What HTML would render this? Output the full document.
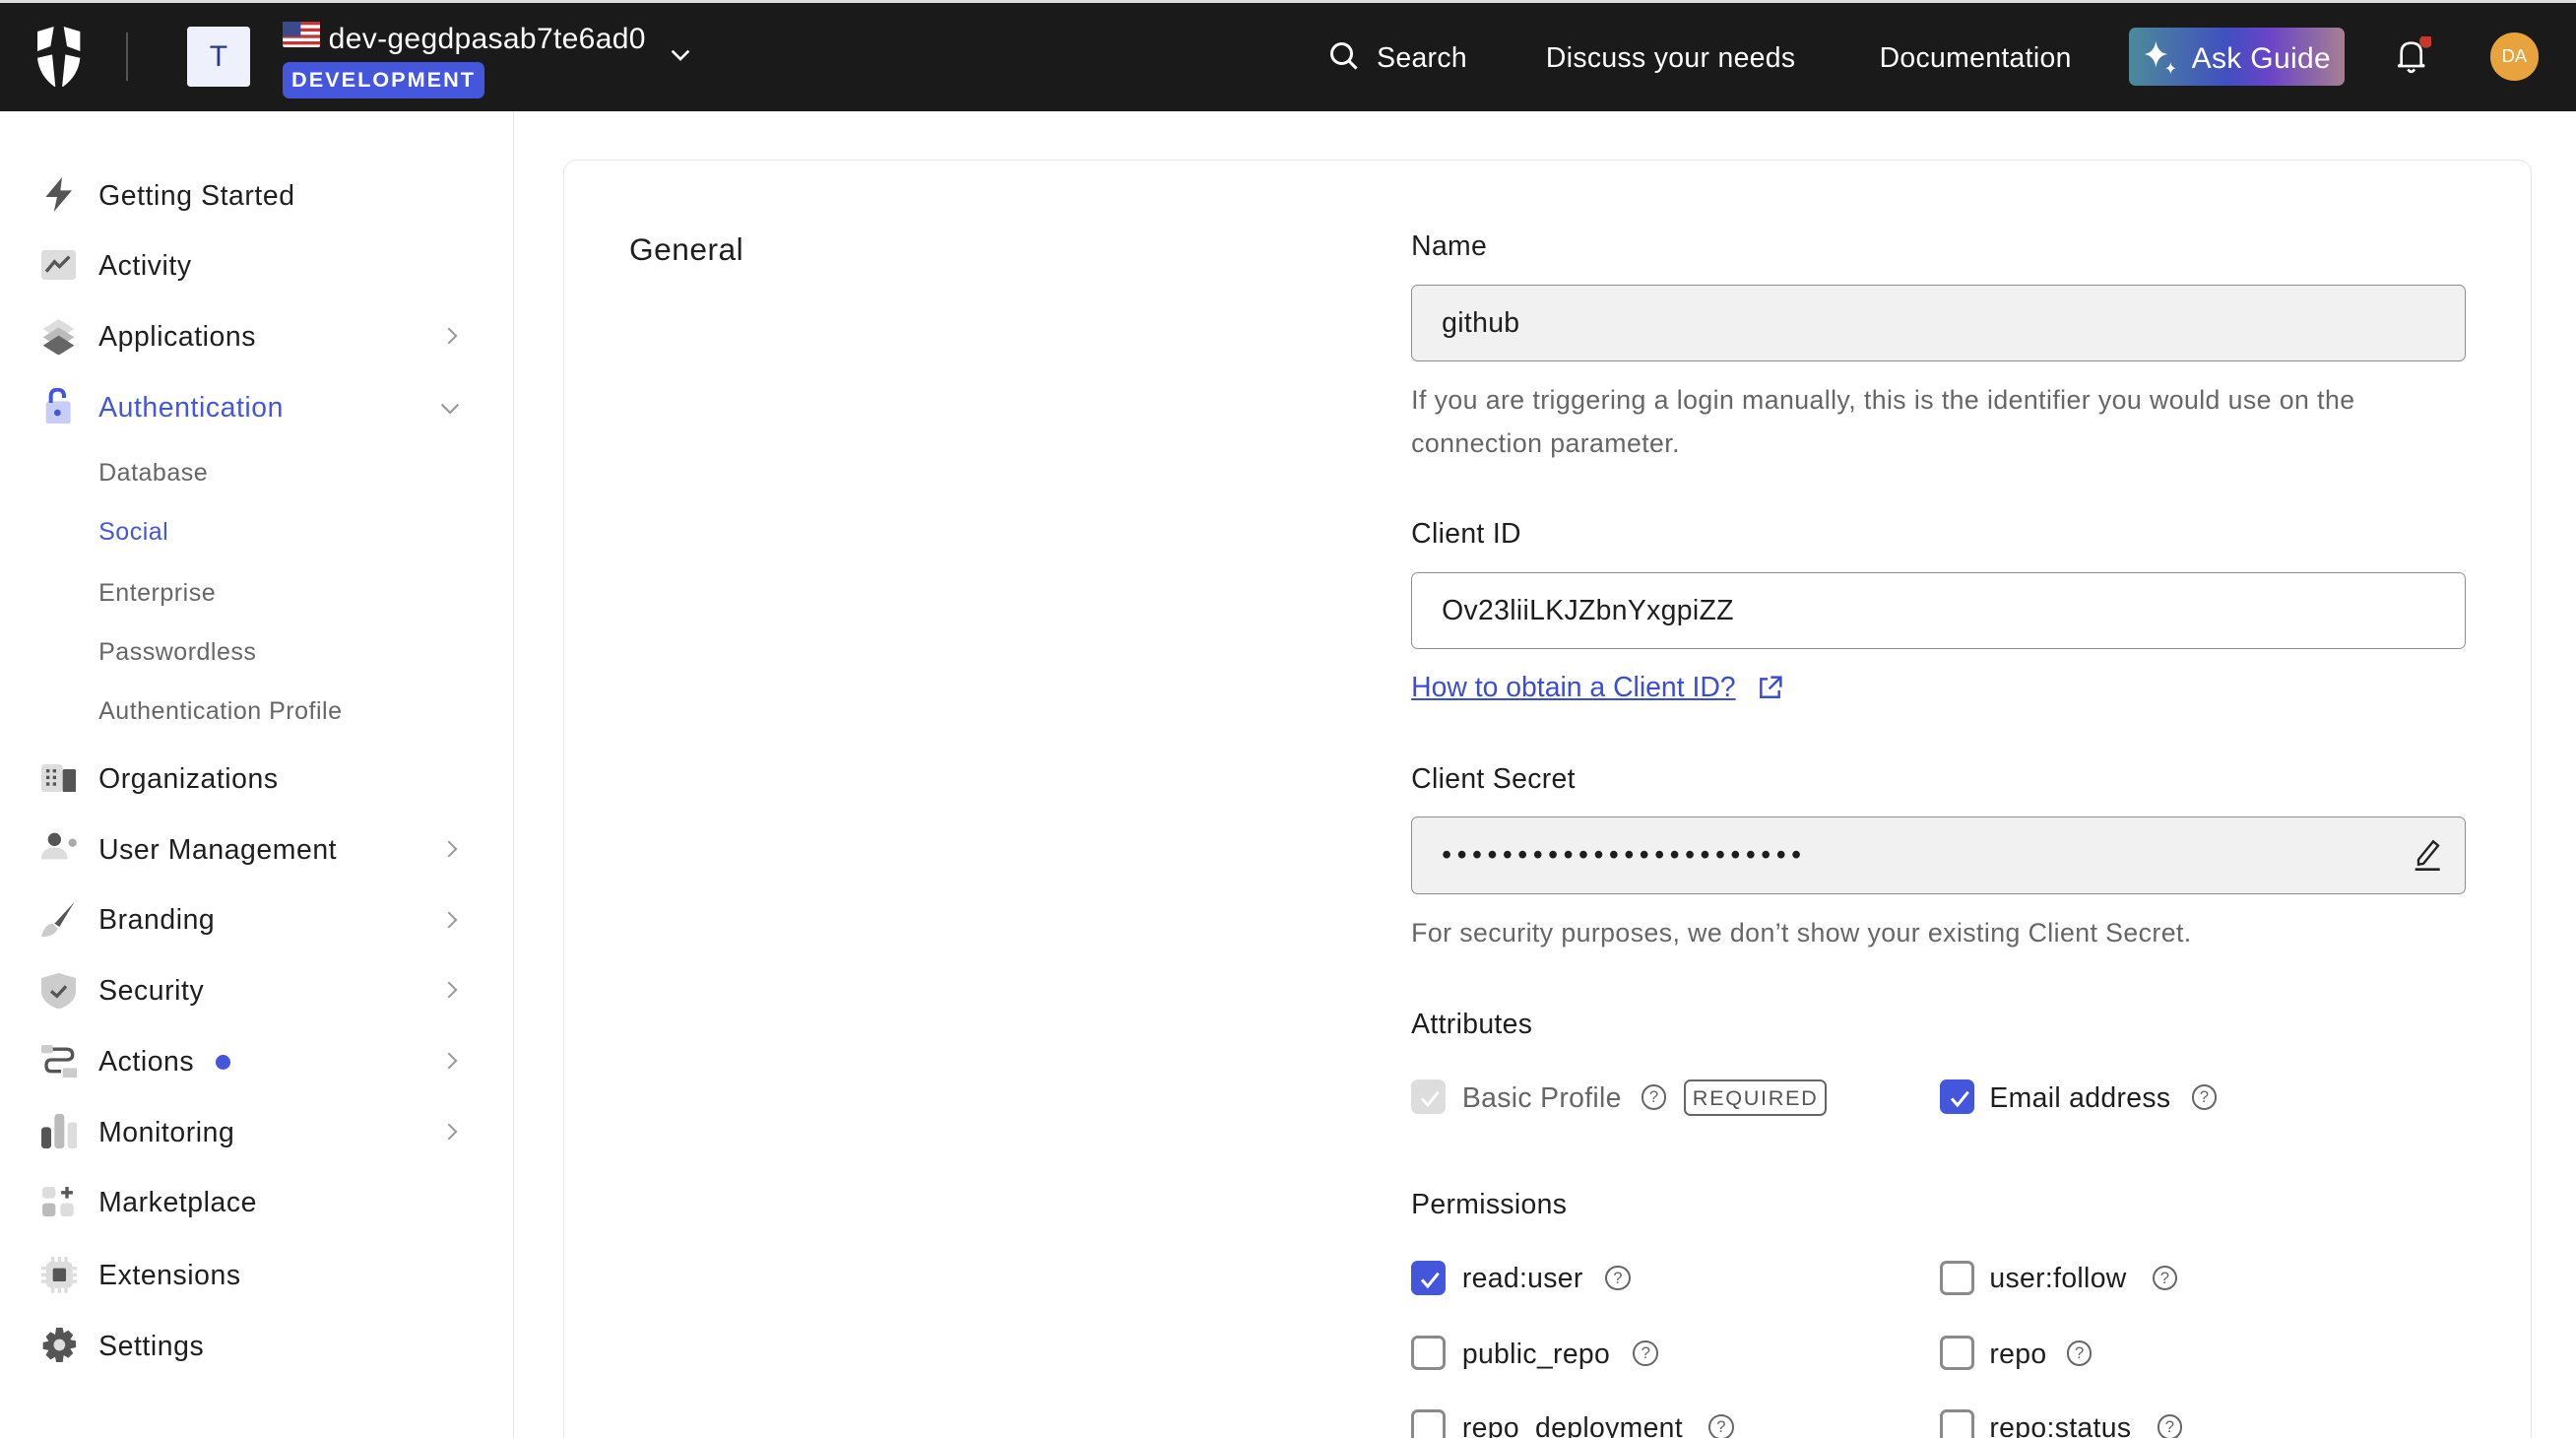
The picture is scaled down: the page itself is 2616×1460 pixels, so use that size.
<!DOCTYPE html>
<html><head><meta charset="utf-8"><style>
html,body{margin:0;padding:0;background:#fff;overflow:hidden}
#r{position:relative;width:1568px;height:875px;zoom:1.66837;font-family:"Liberation Sans",sans-serif;color:#1e1e1e;overflow:hidden}
.a{position:absolute;white-space:nowrap}
.top{position:absolute;left:0;top:0;width:1568px;height:68px;background:#1a1a1a;border-top:2px solid #ddd;box-sizing:border-box}
.w{color:#fff;font-size:17px;padding-top:1.5px;letter-spacing:0.2px}
.nav{font-size:17px;line-height:20px;color:#1e1e1e;padding-top:1.5px;letter-spacing:0.35px}
.sub{font-size:15px;color:#666;padding-top:1.5px;letter-spacing:0.3px}
.chev{position:absolute;left:270px;width:6px;height:6px;border-right:1.3px solid #999;border-top:1.3px solid #999;transform:rotate(45deg)}
.lbl{font-size:17px;color:#1e1e1e;padding-top:1.5px;letter-spacing:0.2px}
.inp{position:absolute;left:859px;width:642px;height:47px;border:1px solid #8d8d8d;border-radius:4px;box-sizing:border-box;font-size:17px;line-height:46px;padding-left:18px;letter-spacing:0.2px}
.help{font-size:16px;color:#666;padding-top:1.5px;letter-spacing:0.25px}
.cb{position:absolute;width:21px;height:21px;border:2px solid #8a8a8a;border-radius:4px;box-sizing:border-box}
.cb.on{background:#4356dc;border-color:#4356dc}
.cb.dis{background:#ddd;border-color:#ddd}
.cb svg{position:absolute;left:2px;top:2px}
.q{position:absolute;width:13px;height:13px;border:1.3px solid #666;border-radius:50%;font-size:10px;line-height:13px;text-align:center;color:#666}
</style></head><body><div id="r">
<div class="top"></div>
<svg class="a" style="left:20px;top:16px" width="32" height="37" viewBox="0 0 32 37"><path d="M3 3 L13 0 L11 12 L3 15 Z M29 3 L19 0 L21 12 L29 15 Z M3 19 L12 17 L14 37 Q4 30 3 19 Z M29 19 L20 17 L18 37 Q28 30 29 19 Z" fill="#fff"/></svg>
<div class="a" style="left:77px;top:20px;width:1px;height:29px;background:#555"></div>
<div class="a" style="left:114px;top:16px;width:38px;height:37px;background:#eef0fb;border-radius:2px;color:#2a3a8a;font-size:18px;text-align:center;line-height:37px">T</div>
<svg class="a" style="left:172px;top:13px" width="23" height="16"><rect width="23" height="16" rx="2" fill="#fff"/><g fill="#c53535"><rect y="0" width="23" height="2"/><rect y="4" width="23" height="2"/><rect y="8" width="23" height="2"/><rect y="12" width="23" height="2"/></g><rect width="11" height="9" fill="#3b4a8c"/></svg>
<div class="a w" style="left:200px;top:12px;font-size:18px">dev-gegdpasab7te6ad0</div>
<div class="a" style="left:172px;top:38px;width:123px;height:22px;background:#4356dc;border-radius:4px;color:#fff;font-size:13px;font-weight:bold;letter-spacing:1.2px;text-align:center;line-height:22px">DEVELOPMENT</div>
<svg class="a" style="left:408px;top:30px" width="12" height="8"><path d="M1 1 L6 6 L11 1" stroke="#fff" stroke-width="1.6" fill="none"/></svg>
<svg class="a" style="left:809px;top:25px" width="18" height="18"><circle cx="7.5" cy="7.5" r="6" stroke="#fff" stroke-width="1.8" fill="none"/><path d="M12 12 L16.5 16.5" stroke="#fff" stroke-width="1.8"/></svg>
<div class="a w" style="left:838px;top:24px">Search</div>
<div class="a w" style="left:941px;top:24px">Discuss your needs</div>
<div class="a w" style="left:1144px;top:24px">Documentation</div>
<div class="a" style="left:1296px;top:17px;width:131px;height:35px;border-radius:4px;background:linear-gradient(90deg,#4d8a9a,#4050c0 45%,#6a44c8 65%,#a58090)"></div>
<svg class="a" style="left:1304px;top:24px" width="22" height="22"><path d="M8 1 Q9 8 15 9 Q9 10 8 17 Q7 10 1 9 Q7 8 8 1Z M17 14 Q17.5 17 20 17.5 Q17.5 18 17 21 Q16.5 18 14 17.5 Q16.5 17 17 14Z" fill="#fff"/></svg>
<div class="a w" style="left:1334px;top:24px;font-size:18px">Ask Guide</div>
<svg class="a" style="left:1458px;top:22px" width="22" height="24"><path d="M4 17 L4 10 Q4 4 10 4 Q16 4 16 10 L16 17 L18 18 L2 18 Z M8 20 Q10 23 12 20" stroke="#fff" stroke-width="1.6" fill="none"/><circle cx="19" cy="3" r="4" fill="#c8382d"/></svg>
<div class="a" style="left:1516px;top:20px;width:29px;height:29px;border-radius:50%;background:#e8a33d;color:#fff;font-size:11px;text-align:center;line-height:29px">DA</div>

<div class="a" style="left:312px;top:68px;width:1px;height:807px;background:#e4e4e4"></div>
<svg class="a" style="left:26px;top:108px" width="20" height="21"><path d="M12 0 L2 12 L9 12 L7 21 L18 8 L11 8 Z" fill="#555"/></svg>
<svg class="a" style="left:25px;top:152px" width="21" height="18"><rect width="21" height="18" rx="2" fill="#ddd"/><path d="M3 13 L8 7 L11 10 L17 4" stroke="#555" stroke-width="2" fill="none"/></svg>
<svg class="a" style="left:25px;top:194px" width="21" height="22"><path d="M10.5 0 L20 6 L10.5 12 L1 6Z" fill="#ddd"/><path d="M10.5 5 L20 11 L10.5 17 L1 11Z" fill="#bbb"/><path d="M10.5 10 L20 16 L10.5 22 L1 16Z" fill="#666"/></svg>
<svg class="a" style="left:27px;top:236px" width="16" height="22"><rect x="1" y="8" width="15" height="14" rx="2" fill="#c8cdf5"/><path d="M4 9 V5 Q4 1 8 1 Q12 1 12 5 V6" stroke="#4356dc" stroke-width="2.4" fill="none"/><circle cx="8" cy="15" r="2" fill="#4356dc"/></svg>
<svg class="a" style="left:25px;top:465px" width="21" height="17"><rect width="13" height="17" rx="2" fill="#ddd"/><rect x="13" y="3" width="8" height="14" rx="1" fill="#555"/><g fill="#555"><rect x="3" y="3" width="2" height="2"/><rect x="7" y="3" width="2" height="2"/><rect x="3" y="7" width="2" height="2"/><rect x="7" y="7" width="2" height="2"/><rect x="3" y="11" width="2" height="2"/><rect x="7" y="11" width="2" height="2"/></g></svg>
<svg class="a" style="left:25px;top:506px" width="22" height="19"><circle cx="8" cy="5" r="4" fill="#555"/><path d="M0 17 Q0 10 8 10 Q16 10 16 17 Z" fill="#ddd"/><circle cx="19" cy="7" r="2.5" fill="#aaa"/></svg>
<svg class="a" style="left:25px;top:549px" width="21" height="21"><path d="M20 0 L8 13 L11 15 Z" fill="#555"/><path d="M7 13 Q2 13 0 21 Q8 21 10 16 Z" fill="#ccc"/></svg>
<svg class="a" style="left:25px;top:592px" width="21" height="22"><path d="M10.5 0 L21 3 V11 Q21 18 10.5 22 Q0 18 0 11 V3Z" fill="#ccc"/><path d="M6 11 L9.5 14 L15 8" stroke="#555" stroke-width="2" fill="none"/></svg>
<svg class="a" style="left:25px;top:636px" width="22" height="20"><rect width="7" height="5" rx="1" fill="#ccc"/><rect x="13" y="14" width="9" height="6" rx="1" fill="#ccc"/><path d="M7 2.5 H15 Q19 2.5 19 6 Q19 9 15 9 H6 Q3 9 3 12.5 Q3 16 6 16 H12" stroke="#555" stroke-width="2" fill="none"/></svg>
<div class="a" style="left:131px;top:642px;width:9px;height:9px;border-radius:50%;background:#4356dc"></div>
<svg class="a" style="left:25px;top:678px" width="22" height="21"><rect x="0" y="8" width="6" height="13" rx="2" fill="#555"/><rect x="8" y="0" width="6" height="21" rx="2" fill="#bbb"/><rect x="16" y="5" width="6" height="16" rx="2" fill="#ddd"/></svg>
<svg class="a" style="left:26px;top:722px" width="20" height="19"><rect width="8" height="7" rx="2" fill="#ddd"/><rect y="10" width="8" height="8" rx="2" fill="#bbb"/><rect x="11" y="10" width="8" height="8" rx="2" fill="#ddd"/><path d="M15 0 V7 M11.5 3.5 H18.5" stroke="#555" stroke-width="2"/></svg>
<svg class="a" style="left:25px;top:765px" width="22" height="22"><rect x="3" y="3" width="16" height="16" rx="3" fill="#ddd"/><rect x="7" y="7" width="8" height="8" rx="1" fill="#555"/><g stroke="#ddd" stroke-width="2"><path d="M7 0V3M11 0V3M15 0V3M7 19V22M11 19V22M15 19V22M0 7H3M0 11H3M0 15H3M19 7H22M19 11H22M19 15H22"/></g></svg>
<svg class="a" style="left:25px;top:808px" width="22" height="22" viewBox="0 0 22 22"><path d="M9 0H13L13.6 3.2L16.4 1.6L19.3 4.4L17.6 7.3L21 8V12L17.6 12.8L19.3 15.6L16.4 18.4L13.6 16.8L13 21H9L8.4 17.8L5.6 19.4L2.7 16.6L4.4 13.7L1 13V9L4.4 8.2L2.7 5.4L5.6 2.6L8.4 4.2Z" fill="#555"/><circle cx="11" cy="10.5" r="3.5" fill="#ddd"/></svg>

<div class="a nav" style="left:60px;top:108px">Getting Started</div>
<div class="a nav" style="left:60px;top:151px">Activity</div>
<div class="a nav" style="left:60px;top:194px">Applications</div><div class="chev" style="top:201px"></div>
<div class="a nav" style="left:60px;top:237px;color:#4356dc">Authentication</div>
<svg class="a" style="left:268px;top:245px" width="12" height="7"><path d="M1 1 L6 6 L11 1" stroke="#999" stroke-width="1.3" fill="none"/></svg>
<div class="a sub" style="left:60px;top:278px">Database</div>
<div class="a sub" style="left:60px;top:314px;color:#4356dc">Social</div>
<div class="a sub" style="left:60px;top:351px">Enterprise</div>
<div class="a sub" style="left:60px;top:387px">Passwordless</div>
<div class="a sub" style="left:60px;top:423px">Authentication Profile</div>
<div class="a nav" style="left:60px;top:463px">Organizations</div>
<div class="a nav" style="left:60px;top:506px">User Management</div><div class="chev" style="top:513px"></div>
<div class="a nav" style="left:60px;top:549px">Branding</div><div class="chev" style="top:556px"></div>
<div class="a nav" style="left:60px;top:592px">Security</div><div class="chev" style="top:599px"></div>
<div class="a nav" style="left:60px;top:635px">Actions</div><div class="chev" style="top:642px"></div>
<div class="a nav" style="left:60px;top:678px">Monitoring</div><div class="chev" style="top:685px"></div>
<div class="a nav" style="left:60px;top:721px">Marketplace</div>
<div class="a nav" style="left:60px;top:765px">Extensions</div>
<div class="a nav" style="left:60px;top:808px">Settings</div>

<div class="a" style="left:343px;top:97px;width:1198px;height:800px;border:1px solid #e6e6e6;border-radius:8px;box-sizing:border-box"></div>
<div class="a" style="left:383px;top:140px;font-size:19px;letter-spacing:0.3px;padding-top:1px">General</div>

<div class="a lbl" style="left:859px;top:139px">Name</div>
<div class="inp" style="top:173px;background:#f1f1f1">github</div>
<div class="a help" style="left:859px;top:233px">If you are triggering a login manually, this is the identifier you would use on the</div>
<div class="a help" style="left:859px;top:259px">connection parameter.</div>
<div class="a lbl" style="left:859px;top:314px">Client ID</div>
<div class="inp" style="top:348px;background:#fff">Ov23liiLKJZbnYxgpiZZ</div>
<div class="a" style="left:859px;top:409px;font-size:17px;color:#3b4cd8;text-decoration:underline">How to obtain a Client ID?</div>
<svg class="a" style="left:1070px;top:411px" width="15" height="15"><path d="M6 2H2V13H13V9 M8 1H14V7 M14 1L7 8" stroke="#3b4cd8" stroke-width="1.5" fill="none"/></svg>
<div class="a lbl" style="left:859px;top:463px">Client Secret</div>
<div class="inp" style="top:497px;background:#f1f1f1;font-size:17px;letter-spacing:3.3px">••••••••••••••••••••••••</div>
<svg class="a" style="left:1469px;top:510px" width="17" height="20"><path d="M3 13 L12 2 L15 4.5 L6 15.5 L3 16Z" stroke="#222" stroke-width="1.4" fill="none"/><path d="M1 19H16" stroke="#222" stroke-width="1.6"/></svg>
<div class="a help" style="left:859px;top:557px">For security purposes, we don’t show your existing Client Secret.</div>

<div class="a lbl" style="left:859px;top:612px">Attributes</div>
<div class="cb dis" style="left:859px;top:657px"><svg width="16" height="16"><path d="M3 8 L6.5 12 L13 4" stroke="#fff" stroke-width="1.6" fill="none"/></svg></div>
<div class="a lbl" style="left:890px;top:657px;color:#666">Basic Profile</div>
<div class="q" style="left:999px;top:660px">?</div>
<div class="a" style="left:1025px;top:657px;width:87px;height:22px;border:1.3px solid #666;border-radius:4px;box-sizing:border-box;font-size:13px;color:#555;letter-spacing:1px;text-align:center;line-height:20px">REQUIRED</div>
<div class="cb on" style="left:1181px;top:657px"><svg width="16" height="16"><path d="M3 8 L6.5 12 L13 4" stroke="#fff" stroke-width="1.8" fill="none"/></svg></div>
<div class="a lbl" style="left:1211px;top:657px">Email address</div>
<div class="q" style="left:1334px;top:660px">?</div>

<div class="a lbl" style="left:859px;top:722px">Permissions</div>
<div class="cb on" style="left:859px;top:767px"><svg width="16" height="16"><path d="M3 8 L6.5 12 L13 4" stroke="#fff" stroke-width="1.8" fill="none"/></svg></div>
<div class="a lbl" style="left:890px;top:767px">read:user</div><div class="q" style="left:977px;top:770px">?</div>
<div class="cb" style="left:1181px;top:767px"></div>
<div class="a lbl" style="left:1211px;top:767px">user:follow</div><div class="q" style="left:1310px;top:770px">?</div>
<div class="cb" style="left:859px;top:813px"></div>
<div class="a lbl" style="left:890px;top:813px">public_repo</div><div class="q" style="left:994px;top:816px">?</div>
<div class="cb" style="left:1181px;top:813px"></div>
<div class="a lbl" style="left:1211px;top:813px">repo</div><div class="q" style="left:1258px;top:816px">?</div>
<div class="cb" style="left:859px;top:858px"></div>
<div class="a lbl" style="left:890px;top:858px">repo_deployment</div><div class="q" style="left:1040px;top:861px">?</div>
<div class="cb" style="left:1181px;top:858px"></div>
<div class="a lbl" style="left:1211px;top:858px">repo:status</div><div class="q" style="left:1313px;top:861px">?</div>
</div></body></html>
